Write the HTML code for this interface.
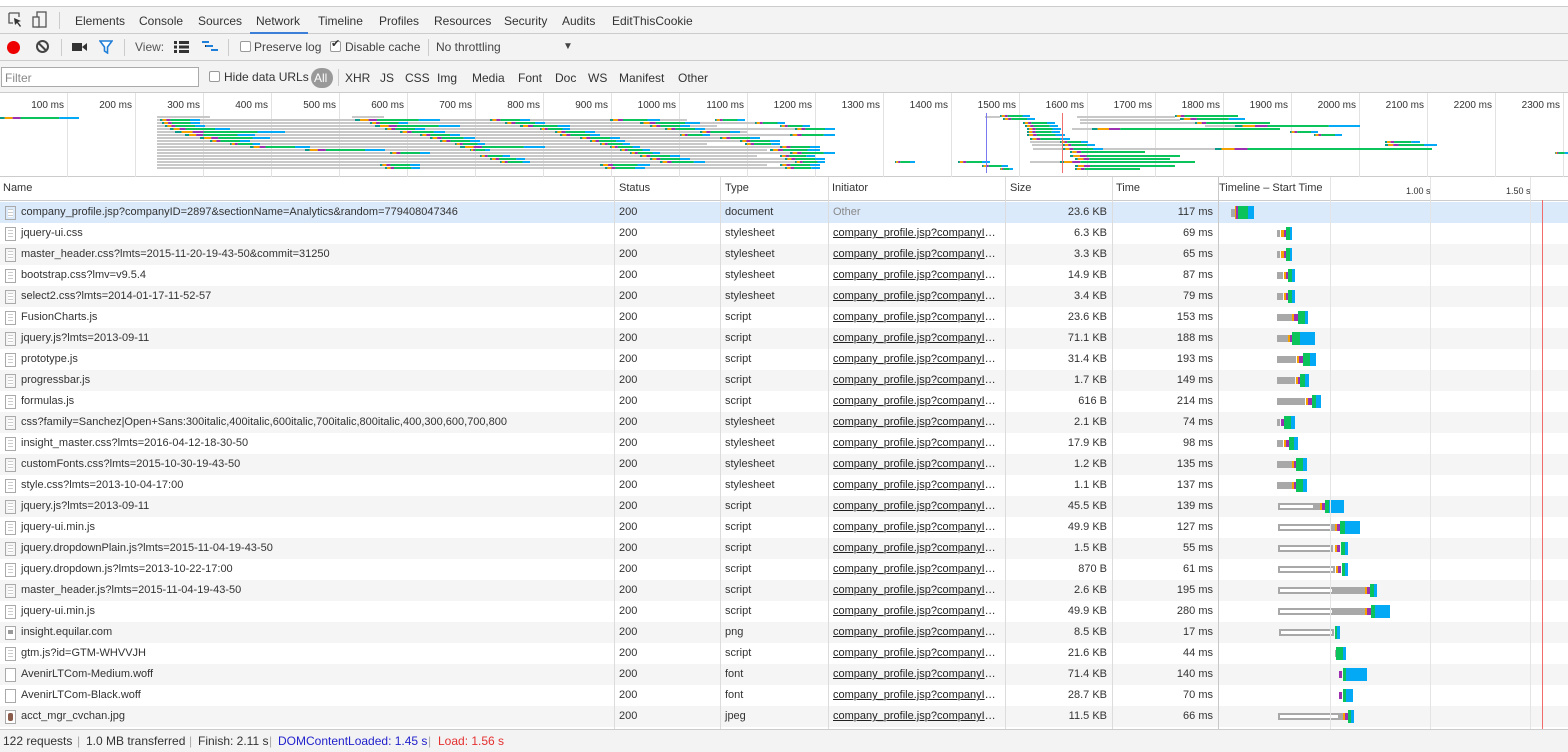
<!DOCTYPE html>
<html><head><meta charset="utf-8"><style>
*{margin:0;padding:0;box-sizing:border-box}
body{width:1568px;height:752px;overflow:hidden;background:#fff;font-family:"Liberation Sans",Arial,sans-serif;font-size:11px;color:#333;position:relative}
.abs{position:absolute}
#tabs{top:6px;left:0;width:1568px;height:28px;background:#f3f3f3;border-top:1px solid #ccc;border-bottom:1px solid #ccc}
#tabs span{position:absolute;top:7px;color:#333;font-size:12px}
#tb2{top:34px;left:0;width:1568px;height:27px;background:#f3f3f3;border-bottom:1px solid #ccc}
#tb2 span,#tb3 span{font-size:12px}
#tb3{top:61px;left:0;width:1568px;height:32px;background:#f3f3f3;border-bottom:1px solid #ccc}
.sep{position:absolute;width:1px;background:#ccc}
.cb{position:absolute;width:11px;height:11px;border:1px solid #999;background:#fff;border-radius:2px}
#ov{top:93px;left:0;width:1568px;height:84px;background:#fff;border-bottom:1px solid #ccc}
#hdr{top:177px;left:0;width:1568px;height:24px;background:#fff;border-bottom:1px solid #ccc}
#hdr span{position:absolute;top:5px}
.row{position:absolute;left:0;width:1568px;height:21px}
.row span{position:absolute;top:4px;white-space:nowrap}
.row .n{left:21px}.row .s{left:619px}.row .t{left:725px}
.row .i{left:833px;width:167px;overflow:hidden;text-overflow:ellipsis;text-decoration:underline;color:#222}
.row .z{right:461px}.row .m{right:355px}
.ic{position:absolute;left:5px;top:4px;width:11px;height:14px;border:1px solid #aaa;background:repeating-linear-gradient(#fff 0 2px,#ccc 2px 3px);background-clip:content-box;padding:2px 2px}
.ic2{background:#fff}
.vl{position:absolute;top:177px;width:1px;height:552px;background:#dcdcdc}
.b{position:absolute;top:7px;height:7px}
.B{position:absolute;top:4px;height:13px}
.o{position:absolute;top:7px;height:7px;border:2px solid #a8a8a8;background:#fff}
.gy{background:#a8a8a8}.te{background:#0a9a8a}.or{background:#f5a100}.pu{background:#9c30b0}.gr{background:#0ac35a}.bl{background:#03a9f4}
#st{top:729px;left:0;width:1568px;height:23px;background:#f3f3f3;border-top:1px solid #ccc}
#st span{position:absolute;top:4px;font-size:12px}
</style></head><body>
<div class="abs" style="top:0;left:0;width:1568px;height:6px;background:#fff"></div>
<div id="tabs" class="abs">
<svg class="abs" style="left:8px;top:5px" width="14" height="16"><path d="M1 1h10v4M1 1v10h4" fill="none" stroke="#555" stroke-width="1.3"/><path d="M6 6l7 3-3 1 3 4-1 1-3-4-2 2z" fill="#333"/></svg>
<svg class="abs" style="left:32px;top:4px" width="16" height="18"><rect x="5" y="1" width="9" height="15" fill="none" stroke="#555" stroke-width="1.3"/><rect x="1" y="6" width="6" height="10" fill="#f3f3f3" stroke="#555" stroke-width="1.3"/></svg>
<div class="sep" style="left:59px;top:5px;height:17px"></div>
<span style="left:75px">Elements</span><span style="left:139px">Console</span><span style="left:198px">Sources</span><span style="left:256px">Network</span><span style="left:318px">Timeline</span><span style="left:379px">Profiles</span><span style="left:434px">Resources</span><span style="left:504px">Security</span><span style="left:562px">Audits</span><span style="left:612px">EditThisCookie</span>
<div class="abs" style="left:250px;top:25px;width:58px;height:2px;background:#3b7ed8"></div>
</div>
<div id="tb2" class="abs">
<div class="abs" style="left:7px;top:7px;width:13px;height:13px;border-radius:50%;background:#e00"></div>
<div class="abs" style="left:36px;top:6px;width:13px;height:13px;border-radius:50%;border:2px solid #444"></div>
<div class="abs" style="left:37px;top:12px;width:11px;height:2px;background:#444;transform:rotate(45deg)"></div>
<div class="sep" style="left:61px;top:5px;height:17px"></div>
<svg class="abs" style="left:72px;top:8px" width="15" height="10"><rect x="0" y="1" width="10" height="8" fill="#333"/><path d="M10 5l5-4v8z" fill="#333"/></svg>
<svg class="abs" style="left:99px;top:6px" width="14" height="14"><path d="M1 1h12l-4.5 6v6l-3-2v-4z" fill="#fff" stroke="#1f7ed8" stroke-width="1.6"/></svg>
<div class="sep" style="left:124px;top:5px;height:17px"></div>
<span class="abs" style="left:135px;top:6px;color:#555">View:</span>
<svg class="abs" style="left:174px;top:7px" width="15" height="12"><g fill="#333"><rect x="0" y="0" width="3" height="3"/><rect x="5" y="0" width="10" height="3"/><rect x="0" y="4.5" width="3" height="3"/><rect x="5" y="4.5" width="10" height="3"/><rect x="0" y="9" width="3" height="3"/><rect x="5" y="9" width="10" height="3"/></g></svg>
<svg class="abs" style="left:202px;top:7px" width="16" height="12"><g fill="#1f7ed8"><rect x="0" y="0" width="7" height="2"/><rect x="4" y="4" width="7" height="2"/><rect x="9" y="8" width="7" height="2"/></g><rect x="3" y="4" width="1" height="2" fill="#333"/></svg>
<div class="sep" style="left:228px;top:5px;height:17px"></div>
<div class="cb" style="left:240px;top:7px"></div><span class="abs" style="left:254px;top:6px;color:#444">Preserve log</span>
<div class="cb" style="left:330px;top:7px"></div><span class="abs" style="left:331px;top:3px;font-size:11px">✔</span><span class="abs" style="left:345px;top:6px;color:#444">Disable cache</span>
<div class="sep" style="left:428px;top:5px;height:17px"></div>
<span class="abs" style="left:436px;top:6px;color:#444">No throttling</span>
<span class="abs" style="left:563px;top:7px;font-size:10px;color:#444">▼</span>
</div>
<div id="tb3" class="abs">
<div class="abs" style="left:1px;top:6px;width:198px;height:20px;border:1px solid #aaa;background:#fff"></div>
<span class="abs" style="left:5px;top:10px;color:#888">Filter</span>
<div class="cb" style="left:209px;top:10px"></div><span class="abs" style="left:224px;top:9px">Hide data URLs</span>
<div class="abs" style="left:311px;top:7px;width:22px;height:20px;border-radius:10px;background:#999"></div><span class="abs" style="left:314px;top:10px;color:#fff">All</span>
<div class="sep" style="left:338px;top:8px;height:17px"></div>
<span class="abs" style="left:345px;top:10px">XHR</span><span class="abs" style="left:380px;top:10px">JS</span><span class="abs" style="left:405px;top:10px">CSS</span><span class="abs" style="left:437px;top:10px">Img</span><span class="abs" style="left:472px;top:10px">Media</span><span class="abs" style="left:518px;top:10px">Font</span><span class="abs" style="left:555px;top:10px">Doc</span><span class="abs" style="left:588px;top:10px">WS</span><span class="abs" style="left:619px;top:10px">Manifest</span><span class="abs" style="left:678px;top:10px">Other</span>
</div>
<div id="ov" class="abs">
<svg width="1568" height="84" style="position:absolute;left:0;top:0">
<defs><symbol id="c" viewBox="0 0 100 3" preserveAspectRatio="none"><rect x="0" y="0" width="6" height="3" fill="#0a9a8a"/><rect x="6" y="0" width="10" height="3" fill="#f5a100"/><rect x="16" y="0" width="10" height="3" fill="#9c30b0"/><rect x="26" y="0" width="49" height="3" fill="#0ac35a"/><rect x="75" y="0" width="25" height="3" fill="#03a9f4"/></symbol>
<symbol id="d" viewBox="0 0 100 3" preserveAspectRatio="none"><rect x="0" y="0" width="3" height="3" fill="#0a9a8a"/><rect x="3" y="0" width="6" height="3" fill="#f5a100"/><rect x="9" y="0" width="6" height="3" fill="#9c30b0"/><rect x="15" y="0" width="85" height="3" fill="#0ac35a"/></symbol></defs>
<g stroke="#e2e2e2" stroke-width="1">
<path d="M67.5 0v84M135.5 0v84M203.5 0v84M271.5 0v84M339.5 0v84M407.5 0v84M475.5 0v84M543.5 0v84M611.5 0v84M679.5 0v84M747.5 0v84M815.5 0v84M883.5 0v84M951.5 0v84M1019.5 0v84M1087.5 0v84M1155.5 0v84M1223.5 0v84M1291.5 0v84M1359.5 0v84M1427.5 0v84M1495.5 0v84M1563.5 0v84"/></g>
<g font-size="10" fill="#333" text-anchor="end" font-family="Liberation Sans,sans-serif">
<text x="64" y="15">100 ms</text><text x="132" y="15">200 ms</text><text x="200" y="15">300 ms</text><text x="268" y="15">400 ms</text><text x="336" y="15">500 ms</text><text x="404" y="15">600 ms</text><text x="472" y="15">700 ms</text><text x="540" y="15">800 ms</text><text x="608" y="15">900 ms</text><text x="676" y="15">1000 ms</text><text x="744" y="15">1100 ms</text><text x="812" y="15">1200 ms</text><text x="880" y="15">1300 ms</text><text x="948" y="15">1400 ms</text><text x="1016" y="15">1500 ms</text><text x="1084" y="15">1600 ms</text><text x="1152" y="15">1700 ms</text><text x="1220" y="15">1800 ms</text><text x="1288" y="15">1900 ms</text><text x="1356" y="15">2000 ms</text><text x="1424" y="15">2100 ms</text><text x="1492" y="15">2200 ms</text><text x="1560" y="15">2300 ms</text></g>
<g fill="#c8c8c8">
<rect x="157" y="23" width="53" height="2"/><rect x="352" y="23" width="32" height="2"/>
<rect x="157" y="26" width="530" height="2"/><rect x="157" y="29" width="600" height="2"/><rect x="157" y="32" width="560" height="2"/><rect x="157" y="35" width="640" height="2"/><rect x="157" y="38" width="590" height="2"/><rect x="157" y="41" width="660" height="2"/><rect x="157" y="44" width="600" height="2"/><rect x="157" y="47" width="620" height="2"/><rect x="157" y="50" width="550" height="2"/><rect x="157" y="53" width="660" height="2"/><rect x="157" y="56" width="610" height="2"/><rect x="157" y="59" width="670" height="2"/><rect x="157" y="62" width="600" height="2"/><rect x="157" y="65" width="650" height="2"/><rect x="157" y="68" width="640" height="2"/><rect x="157" y="71" width="610" height="2"/><rect x="157" y="74" width="640" height="2"/>
<rect x="985" y="23" width="15" height="2"/><rect x="1030" y="48" width="30" height="2"/><rect x="1032" y="51" width="31" height="2"/><rect x="1033" y="55" width="30" height="2"/><rect x="1030" y="68" width="30" height="2"/>
<rect x="1077" y="23" width="98" height="2"/><rect x="1080" y="26" width="100" height="2"/><rect x="1080" y="29" width="115" height="2"/><rect x="1205" y="32" width="30" height="2"/><rect x="1072" y="35" width="20" height="2"/><rect x="1095" y="55" width="120" height="2"/>
</g>
<g>
<use href="#c" x="0" y="24" width="79" height="2"/>
<use href="#c" x="160" y="26" width="40" height="2"/><use href="#c" x="355" y="26" width="85" height="2"/><use href="#c" x="490" y="26" width="40" height="2"/><use href="#c" x="610" y="26" width="50" height="2"/><use href="#c" x="715" y="26" width="30" height="2"/>
<use href="#c" x="162" y="29" width="38" height="2"/><use href="#c" x="370" y="29" width="38" height="2"/><use href="#c" x="505" y="29" width="40" height="2"/><use href="#c" x="640" y="29" width="60" height="2"/><use href="#c" x="755" y="29" width="30" height="2"/>
<use href="#c" x="165" y="32" width="40" height="2"/><use href="#c" x="375" y="32" width="85" height="2"/><use href="#c" x="520" y="32" width="50" height="2"/><use href="#c" x="650" y="32" width="40" height="2"/><use href="#c" x="780" y="32" width="30" height="2"/>
<use href="#c" x="170" y="35" width="60" height="2"/><use href="#c" x="385" y="35" width="40" height="2"/><use href="#c" x="540" y="35" width="30" height="2"/><use href="#c" x="665" y="35" width="40" height="2"/><use href="#c" x="795" y="35" width="40" height="2"/>
<use href="#c" x="175" y="38" width="110" height="2"/><use href="#c" x="400" y="38" width="45" height="2"/><use href="#c" x="555" y="38" width="40" height="2"/><use href="#c" x="700" y="38" width="40" height="2"/>
<use href="#c" x="185" y="41" width="70" height="2"/><use href="#c" x="420" y="41" width="40" height="2"/><use href="#c" x="560" y="41" width="40" height="2"/><use href="#c" x="680" y="41" width="30" height="2"/><use href="#c" x="790" y="41" width="45" height="2"/>
<use href="#c" x="200" y="44" width="70" height="2"/><use href="#c" x="430" y="44" width="45" height="2"/><use href="#c" x="580" y="44" width="40" height="2"/><use href="#c" x="720" y="44" width="40" height="2"/>
<use href="#c" x="210" y="47" width="40" height="2"/><use href="#c" x="440" y="47" width="40" height="2"/><use href="#c" x="590" y="47" width="35" height="2"/><use href="#c" x="740" y="47" width="40" height="2"/>
<use href="#c" x="230" y="50" width="30" height="2"/><use href="#c" x="455" y="50" width="30" height="2"/><use href="#c" x="600" y="50" width="30" height="2"/><use href="#c" x="745" y="50" width="35" height="2"/>
<use href="#c" x="250" y="53" width="60" height="2"/><use href="#c" x="460" y="53" width="85" height="2"/><use href="#c" x="610" y="53" width="30" height="2"/><use href="#c" x="780" y="53" width="40" height="2"/>
<use href="#c" x="305" y="56" width="80" height="2"/><use href="#c" x="470" y="56" width="20" height="2"/><use href="#c" x="620" y="56" width="30" height="2"/><use href="#c" x="770" y="56" width="50" height="2"/>
<use href="#c" x="390" y="59" width="40" height="2"/><use href="#c" x="630" y="59" width="30" height="2"/><use href="#c" x="790" y="59" width="45" height="2"/>
<use href="#c" x="480" y="62" width="30" height="2"/><use href="#c" x="640" y="62" width="40" height="2"/><use href="#c" x="780" y="62" width="35" height="2"/>
<use href="#c" x="490" y="65" width="35" height="2"/><use href="#c" x="650" y="65" width="40" height="2"/><use href="#c" x="785" y="65" width="40" height="2"/>
<use href="#c" x="500" y="68" width="30" height="2"/><use href="#c" x="660" y="68" width="45" height="2"/><use href="#c" x="795" y="68" width="30" height="2"/><use href="#c" x="895" y="68" width="20" height="2"/>
<use href="#c" x="380" y="71" width="40" height="2"/><use href="#c" x="600" y="71" width="50" height="2"/><use href="#c" x="780" y="71" width="40" height="2"/>
<use href="#c" x="385" y="74" width="35" height="2"/><use href="#c" x="605" y="74" width="40" height="2"/><use href="#c" x="785" y="74" width="35" height="2"/>
<use href="#c" x="1000" y="22" width="30" height="2"/><use href="#c" x="1003" y="25" width="32" height="2"/><use href="#c" x="1023" y="29" width="32" height="2"/><use href="#c" x="1025" y="32" width="33" height="2"/><use href="#c" x="1027" y="35" width="34" height="2"/><use href="#c" x="1027" y="38" width="33" height="2"/><use href="#c" x="1027" y="41" width="38" height="2"/><use href="#c" x="1030" y="45" width="40" height="2"/><use href="#c" x="1060" y="48" width="28" height="2"/><use href="#c" x="1063" y="51" width="32" height="2"/><use href="#c" x="1063" y="55" width="40" height="2"/>
<use href="#d" x="1070" y="58" width="75" height="2"/><use href="#d" x="1070" y="62" width="110" height="2"/><use href="#d" x="1075" y="65" width="95" height="2"/><use href="#d" x="1060" y="68" width="135" height="2"/><use href="#d" x="1075" y="72" width="100" height="2"/><use href="#d" x="1075" y="75" width="65" height="2"/>
<use href="#d" x="1175" y="22" width="63" height="2"/><use href="#c" x="1180" y="25" width="65" height="2"/><use href="#d" x="1195" y="29" width="75" height="2"/><use href="#c" x="1235" y="32" width="125" height="2"/><use href="#d" x="1092" y="35" width="188" height="2"/><use href="#c" x="1290" y="38" width="28" height="2"/><use href="#c" x="1314" y="41" width="28" height="2"/><use href="#c" x="1385" y="48" width="35" height="2"/><use href="#c" x="1385" y="51" width="52" height="2"/><use href="#d" x="1215" y="55" width="217" height="2"/>
<use href="#c" x="958" y="68" width="32" height="2"/><use href="#c" x="982" y="72" width="26" height="2"/><use href="#c" x="1000" y="75" width="13" height="2"/><use href="#c" x="1555" y="59" width="13" height="2"/>
</g>
<rect x="986" y="20" width="1" height="60" fill="#7a7af0"/><rect x="1062" y="20" width="1" height="60" fill="#f07070"/>
</svg>
</div>
<div id="hdr" class="abs">
<span style="left:3px">Name</span><span style="left:619px">Status</span><span style="left:725px">Type</span><span style="left:832px">Initiator</span><span style="left:1010px">Size</span><span style="left:1116px">Time</span><span style="left:1219px">Timeline – Start Time</span>
<span style="left:1406px;top:9px;font-size:9px">1.00 s</span><span style="left:1506px;top:9px;font-size:9px">1.50 s</span>
</div>
<div class="row" style="top:202px;background:#dbeafb"><div class="ic"></div><span class="n">company_profile.jsp?companyID=2897&amp;sectionName=Analytics&amp;random=779408047346</span><span class="s">200</span><span class="t">document</span><span class="i" style="text-decoration:none;color:#888">Other</span><span class="z">23.6 KB</span><span class="m">117 ms</span>
<i class="B gy" style="left:1231px;width:4px;top:7px;height:8px"></i><i class="B or" style="left:1235px;width:1px"></i><i class="B pu" style="left:1236px;width:2px"></i><i class="B gr" style="left:1238px;width:10px"></i><i class="B bl" style="left:1248px;width:6px"></i></div>
<div class="row" style="top:223px"><div class="ic"></div><span class="n">jquery-ui.css</span><span class="s">200</span><span class="t">stylesheet</span><span class="i">company_profile.jsp?companyID=2897</span><span class="z">6.3 KB</span><span class="m">69 ms</span>
<i class="b gy" style="left:1277px;width:3px"></i><i class="b or" style="left:1281px;width:3px"></i><i class="b pu" style="left:1284px;width:2px"></i><i class="B gr" style="left:1286px;width:4px"></i><i class="B bl" style="left:1290px;width:2px"></i></div>
<div class="row" style="top:244px;background:#f5f5f5"><div class="ic"></div><span class="n">master_header.css?lmts=2015-11-20-19-43-50&amp;commit=31250</span><span class="s">200</span><span class="t">stylesheet</span><span class="i">company_profile.jsp?companyID=2897</span><span class="z">3.3 KB</span><span class="m">65 ms</span>
<i class="b gy" style="left:1277px;width:3px"></i><i class="b or" style="left:1281px;width:3px"></i><i class="b pu" style="left:1284px;width:2px"></i><i class="B gr" style="left:1286px;width:4px"></i><i class="B bl" style="left:1290px;width:2px"></i></div>
<div class="row" style="top:265px"><div class="ic"></div><span class="n">bootstrap.css?lmv=v9.5.4</span><span class="s">200</span><span class="t">stylesheet</span><span class="i">company_profile.jsp?companyID=2897</span><span class="z">14.9 KB</span><span class="m">87 ms</span>
<i class="b gy" style="left:1277px;width:6px"></i><i class="b or" style="left:1284px;width:2px"></i><i class="b pu" style="left:1286px;width:2px"></i><i class="B gr" style="left:1288px;width:4px"></i><i class="B bl" style="left:1292px;width:3px"></i></div>
<div class="row" style="top:286px;background:#f5f5f5"><div class="ic"></div><span class="n">select2.css?lmts=2014-01-17-11-52-57</span><span class="s">200</span><span class="t">stylesheet</span><span class="i">company_profile.jsp?companyID=2897</span><span class="z">3.4 KB</span><span class="m">79 ms</span>
<i class="b gy" style="left:1277px;width:6px"></i><i class="b or" style="left:1284px;width:2px"></i><i class="b pu" style="left:1286px;width:2px"></i><i class="B gr" style="left:1288px;width:4px"></i><i class="B bl" style="left:1292px;width:3px"></i></div>
<div class="row" style="top:307px"><div class="ic"></div><span class="n">FusionCharts.js</span><span class="s">200</span><span class="t">script</span><span class="i">company_profile.jsp?companyID=2897</span><span class="z">23.6 KB</span><span class="m">153 ms</span>
<i class="b gy" style="left:1277px;width:15px"></i><i class="b or" style="left:1292px;width:2px"></i><i class="b pu" style="left:1294px;width:4px"></i><i class="B gr" style="left:1298px;width:7px"></i><i class="B bl" style="left:1305px;width:3px"></i></div>
<div class="row" style="top:328px;background:#f5f5f5"><div class="ic"></div><span class="n">jquery.js?lmts=2013-09-11</span><span class="s">200</span><span class="t">script</span><span class="i">company_profile.jsp?companyID=2897</span><span class="z">71.1 KB</span><span class="m">188 ms</span>
<i class="b gy" style="left:1277px;width:11px"></i><i class="b or" style="left:1288px;width:2px"></i><i class="b pu" style="left:1290px;width:2px"></i><i class="B gr" style="left:1292px;width:8px"></i><i class="B bl" style="left:1300px;width:15px"></i></div>
<div class="row" style="top:349px"><div class="ic"></div><span class="n">prototype.js</span><span class="s">200</span><span class="t">script</span><span class="i">company_profile.jsp?companyID=2897</span><span class="z">31.4 KB</span><span class="m">193 ms</span>
<i class="b gy" style="left:1277px;width:19px"></i><i class="b or" style="left:1297px;width:2px"></i><i class="b pu" style="left:1299px;width:4px"></i><i class="B gr" style="left:1303px;width:7px"></i><i class="B bl" style="left:1310px;width:6px"></i></div>
<div class="row" style="top:370px;background:#f5f5f5"><div class="ic"></div><span class="n">progressbar.js</span><span class="s">200</span><span class="t">script</span><span class="i">company_profile.jsp?companyID=2897</span><span class="z">1.7 KB</span><span class="m">149 ms</span>
<i class="b gy" style="left:1277px;width:18px"></i><i class="b or" style="left:1296px;width:2px"></i><i class="b pu" style="left:1298px;width:2px"></i><i class="B gr" style="left:1300px;width:5px"></i><i class="B bl" style="left:1305px;width:4px"></i></div>
<div class="row" style="top:391px"><div class="ic"></div><span class="n">formulas.js</span><span class="s">200</span><span class="t">script</span><span class="i">company_profile.jsp?companyID=2897</span><span class="z">616 B</span><span class="m">214 ms</span>
<i class="b gy" style="left:1277px;width:28px"></i><i class="b or" style="left:1306px;width:2px"></i><i class="b pu" style="left:1308px;width:4px"></i><i class="B gr" style="left:1312px;width:4px"></i><i class="B bl" style="left:1316px;width:5px"></i></div>
<div class="row" style="top:412px;background:#f5f5f5"><div class="ic"></div><span class="n">css?family=Sanchez|Open+Sans:300italic,400italic,600italic,700italic,800italic,400,300,600,700,800</span><span class="s">200</span><span class="t">stylesheet</span><span class="i">company_profile.jsp?companyID=2897</span><span class="z">2.1 KB</span><span class="m">74 ms</span>
<i class="b gy" style="left:1277px;width:3px"></i><i class="b pu" style="left:1281px;width:3px"></i><i class="B gr" style="left:1284px;width:7px"></i><i class="B bl" style="left:1291px;width:4px"></i></div>
<div class="row" style="top:433px"><div class="ic"></div><span class="n">insight_master.css?lmts=2016-04-12-18-30-50</span><span class="s">200</span><span class="t">stylesheet</span><span class="i">company_profile.jsp?companyID=2897</span><span class="z">17.9 KB</span><span class="m">98 ms</span>
<i class="b gy" style="left:1277px;width:6px"></i><i class="b or" style="left:1284px;width:2px"></i><i class="b pu" style="left:1286px;width:3px"></i><i class="B gr" style="left:1289px;width:5px"></i><i class="B bl" style="left:1294px;width:4px"></i></div>
<div class="row" style="top:454px;background:#f5f5f5"><div class="ic"></div><span class="n">customFonts.css?lmts=2015-10-30-19-43-50</span><span class="s">200</span><span class="t">stylesheet</span><span class="i">company_profile.jsp?companyID=2897</span><span class="z">1.2 KB</span><span class="m">135 ms</span>
<i class="b gy" style="left:1277px;width:15px"></i><i class="b or" style="left:1292px;width:2px"></i><i class="b pu" style="left:1294px;width:2px"></i><i class="B gr" style="left:1296px;width:7px"></i><i class="B bl" style="left:1303px;width:4px"></i></div>
<div class="row" style="top:475px"><div class="ic"></div><span class="n">style.css?lmts=2013-10-04-17:00</span><span class="s">200</span><span class="t">stylesheet</span><span class="i">company_profile.jsp?companyID=2897</span><span class="z">1.1 KB</span><span class="m">137 ms</span>
<i class="b gy" style="left:1277px;width:15px"></i><i class="b or" style="left:1292px;width:2px"></i><i class="b pu" style="left:1294px;width:2px"></i><i class="B gr" style="left:1296px;width:7px"></i><i class="B bl" style="left:1303px;width:4px"></i></div>
<div class="row" style="top:496px;background:#f5f5f5"><div class="ic"></div><span class="n">jquery.js?lmts=2013-09-11</span><span class="s">200</span><span class="t">script</span><span class="i">company_profile.jsp?companyID=2897</span><span class="z">45.5 KB</span><span class="m">139 ms</span>
<i class="o" style="left:1278px;width:37px"></i><i class="b gy" style="left:1315px;width:5px"></i><i class="b or" style="left:1320px;width:2px"></i><i class="b pu" style="left:1322px;width:3px"></i><i class="B gr" style="left:1325px;width:4px"></i><i class="B bl" style="left:1329px;width:15px"></i></div>
<div class="row" style="top:517px"><div class="ic"></div><span class="n">jquery-ui.min.js</span><span class="s">200</span><span class="t">script</span><span class="i">company_profile.jsp?companyID=2897</span><span class="z">49.9 KB</span><span class="m">127 ms</span>
<i class="o" style="left:1278px;width:55px"></i><i class="b gy" style="left:1333px;width:2px"></i><i class="b or" style="left:1335px;width:2px"></i><i class="b pu" style="left:1337px;width:3px"></i><i class="B gr" style="left:1340px;width:5px"></i><i class="B bl" style="left:1345px;width:15px"></i></div>
<div class="row" style="top:538px;background:#f5f5f5"><div class="ic"></div><span class="n">jquery.dropdownPlain.js?lmts=2015-11-04-19-43-50</span><span class="s">200</span><span class="t">script</span><span class="i">company_profile.jsp?companyID=2897</span><span class="z">1.5 KB</span><span class="m">55 ms</span>
<i class="o" style="left:1278px;width:55px"></i><i class="b or" style="left:1335px;width:2px"></i><i class="b pu" style="left:1337px;width:3px"></i><i class="B gr" style="left:1341px;width:4px"></i><i class="B bl" style="left:1345px;width:3px"></i></div>
<div class="row" style="top:559px"><div class="ic"></div><span class="n">jquery.dropdown.js?lmts=2013-10-22-17:00</span><span class="s">200</span><span class="t">script</span><span class="i">company_profile.jsp?companyID=2897</span><span class="z">870 B</span><span class="m">61 ms</span>
<i class="o" style="left:1278px;width:57px"></i><i class="b or" style="left:1336px;width:2px"></i><i class="b pu" style="left:1338px;width:3px"></i><i class="B gr" style="left:1342px;width:3px"></i><i class="B bl" style="left:1345px;width:3px"></i></div>
<div class="row" style="top:580px;background:#f5f5f5"><div class="ic"></div><span class="n">master_header.js?lmts=2015-11-04-19-43-50</span><span class="s">200</span><span class="t">script</span><span class="i">company_profile.jsp?companyID=2897</span><span class="z">2.6 KB</span><span class="m">195 ms</span>
<i class="o" style="left:1278px;width:56px"></i><i class="b gy" style="left:1334px;width:31px"></i><i class="b or" style="left:1365px;width:2px"></i><i class="b pu" style="left:1367px;width:3px"></i><i class="B gr" style="left:1370px;width:4px"></i><i class="B bl" style="left:1374px;width:3px"></i></div>
<div class="row" style="top:601px"><div class="ic"></div><span class="n">jquery-ui.min.js</span><span class="s">200</span><span class="t">script</span><span class="i">company_profile.jsp?companyID=2897</span><span class="z">49.9 KB</span><span class="m">280 ms</span>
<i class="o" style="left:1278px;width:56px"></i><i class="b gy" style="left:1334px;width:31px"></i><i class="b or" style="left:1365px;width:2px"></i><i class="b pu" style="left:1367px;width:4px"></i><i class="B gr" style="left:1371px;width:4px"></i><i class="B bl" style="left:1375px;width:15px"></i></div>
<div class="row" style="top:622px;background:#f5f5f5"><div class="ic" style="background:#fff;padding:3px 2px"><div style="width:5px;height:4px;background:#999"></div></div><span class="n">insight.equilar.com</span><span class="s">200</span><span class="t">png</span><span class="i">company_profile.jsp?companyID=2897</span><span class="z">8.5 KB</span><span class="m">17 ms</span>
<i class="o" style="left:1279px;width:55px"></i><i class="B gr" style="left:1335px;width:2px"></i><i class="B bl" style="left:1337px;width:3px"></i></div>
<div class="row" style="top:643px"><div class="ic"></div><span class="n">gtm.js?id=GTM-WHVVJH</span><span class="s">200</span><span class="t">script</span><span class="i">company_profile.jsp?companyID=2897</span><span class="z">21.6 KB</span><span class="m">44 ms</span>
<i class="b gy" style="left:1335px;width:1px"></i><i class="B gr" style="left:1336px;width:7px"></i><i class="B bl" style="left:1343px;width:3px"></i></div>
<div class="row" style="top:664px;background:#f5f5f5"><div class="ic ic2"></div><span class="n">AvenirLTCom-Medium.woff</span><span class="s">200</span><span class="t">font</span><span class="i">company_profile.jsp?companyID=2897</span><span class="z">71.4 KB</span><span class="m">140 ms</span>
<i class="b pu" style="left:1339px;width:3px"></i><i class="B gr" style="left:1343px;width:3px"></i><i class="B bl" style="left:1346px;width:21px"></i></div>
<div class="row" style="top:685px"><div class="ic ic2"></div><span class="n">AvenirLTCom-Black.woff</span><span class="s">200</span><span class="t">font</span><span class="i">company_profile.jsp?companyID=2897</span><span class="z">28.7 KB</span><span class="m">70 ms</span>
<i class="b pu" style="left:1339px;width:3px"></i><i class="B gr" style="left:1343px;width:3px"></i><i class="B bl" style="left:1346px;width:7px"></i></div>
<div class="row" style="top:706px;background:#f5f5f5"><div class="ic" style="background:#fff;padding:2px 2px"><div style="width:5px;height:8px;background:#8a5a4a;border-radius:2px"></div></div><span class="n">acct_mgr_cvchan.jpg</span><span class="s">200</span><span class="t">jpeg</span><span class="i">company_profile.jsp?companyID=2897</span><span class="z">11.5 KB</span><span class="m">66 ms</span>
<i class="o" style="left:1278px;width:62px"></i><i class="b gy" style="left:1340px;width:3px"></i><i class="b or" style="left:1343px;width:2px"></i><i class="b pu" style="left:1345px;width:3px"></i><i class="B gr" style="left:1348px;width:3px"></i><i class="B bl" style="left:1351px;width:3px"></i></div>
<div class="vl" style="left:614px"></div><div class="vl" style="left:720px"></div><div class="vl" style="left:828px"></div><div class="vl" style="left:1005px"></div><div class="vl" style="left:1112px"></div><div class="vl" style="left:1218px;background:#c8c8c8"></div>
<div class="vl" style="left:1330px;background:#e4e4e4"></div><div class="vl" style="left:1430px;background:#e4e4e4"></div><div class="vl" style="left:1530px;background:#e4e4e4"></div>
<div class="abs" style="left:1542px;top:200px;width:1px;height:529px;background:#f26b6b"></div>
<div id="st" class="abs">
<span style="left:3px">122 requests</span><span style="left:77px;color:#aaa">|</span><span style="left:86px">1.0 MB transferred</span><span style="left:189px;color:#aaa">|</span><span style="left:198px">Finish: 2.11 s</span><span style="left:269px;color:#aaa">|</span><span style="left:278px;color:#2222cc">DOMContentLoaded: 1.45 s</span><span style="left:428px;color:#aaa">|</span><span style="left:438px;color:#e53030">Load: 1.56 s</span>
</div>
</body></html>
